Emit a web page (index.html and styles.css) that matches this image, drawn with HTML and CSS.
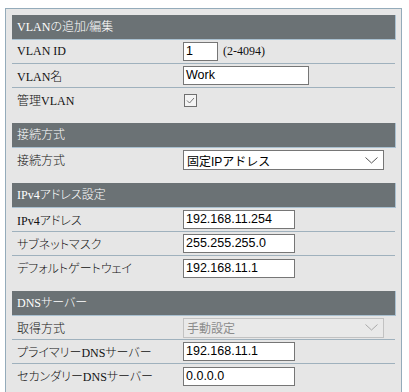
FILE: index.html
```html
<!DOCTYPE html>
<html lang="ja">
<head>
<meta charset="utf-8">
<title>VLAN</title>
<link rel="stylesheet" href="styles.css">
</head>
<body>
<div class="panel">
  <section class="section">
    <div class="head">VLANの追加/編集</div>
    <div class="row">
      <div class="label">VLAN ID</div>
      <div class="field"><span class="input w-id">1</span><span class="hint">(2-4094)</span></div>
    </div>
    <div class="row">
      <div class="label">VLAN名</div>
      <div class="field"><span class="input w-name">Work</span></div>
    </div>
    <div class="row last">
      <div class="label">管理VLAN</div>
      <div class="field">
        <span class="check"><svg width="11" height="11" viewBox="0 0 11 11"><path d="M2 5.5 L4.5 8 L9 3" fill="none" stroke="#666" stroke-width="0.9"/></svg></span>
      </div>
    </div>
  </section>

  <section class="section">
    <div class="head">接続方式</div>
    <div class="row last">
      <div class="label">接続方式</div>
      <div class="field">
        <div class="select"><span>固定IPアドレス</span><svg class="chev" width="13" height="7" viewBox="0 0 13 7"><path d="M0.5 0.5 L6.5 6 L12.5 0.5" fill="none" stroke="#555" stroke-width="1"/></svg></div>
      </div>
    </div>
  </section>

  <section class="section">
    <div class="head">IPv4アドレス設定</div>
    <div class="row">
      <div class="label">IPv4アドレス</div>
      <div class="field"><span class="input w-ip">192.168.11.254</span></div>
    </div>
    <div class="row">
      <div class="label">サブネットマスク</div>
      <div class="field"><span class="input w-ip">255.255.255.0</span></div>
    </div>
    <div class="row last">
      <div class="label">デフォルトゲートウェイ</div>
      <div class="field"><span class="input w-ip">192.168.11.1</span></div>
    </div>
  </section>

  <section class="section">
    <div class="head">DNSサーバー</div>
    <div class="row">
      <div class="label">取得方式</div>
      <div class="field">
        <div class="select disabled"><span>手動設定</span><svg class="chev" width="13" height="7" viewBox="0 0 13 7"><path d="M0.5 0.5 L6.5 6 L12.5 0.5" fill="none" stroke="#a8a8a8" stroke-width="1"/></svg></div>
      </div>
    </div>
    <div class="row">
      <div class="label">プライマリーDNSサーバー</div>
      <div class="field"><span class="input w-ip">192.168.11.1</span></div>
    </div>
    <div class="row last">
      <div class="label">セカンダリーDNSサーバー</div>
      <div class="field"><span class="input w-ip">0.0.0.0</span></div>
    </div>
  </section>
</div>
</body>
</html>
```
FILE: styles.css
```css
html, body {
  margin: 0;
  padding: 0;
  background: #ffffff;
}

body {
  font-family: "Liberation Serif", "Noto Sans CJK JP", serif;
  font-size: 12px;
  font-weight: 300;
  color: #111;
}

.panel {
  box-sizing: border-box;
  width: 397px;
  margin: 8px 0 0 5px;
  padding: 6px 5px 12px 6px;
  background: #e6e6e6;
  border: 1px solid #94abba;
}

.section {
  margin-bottom: 11px;
}

.section:last-child {
  margin-bottom: 0;
}

.head {
  box-sizing: border-box;
  height: 25px;
  line-height: 24px;
  padding-left: 5px;
  background: #6b7275;
  color: #ffffff;
  border-right: 1px solid #a9c0d0;
  border-bottom: 1px solid #a9c0d0;
  font-feature-settings: "palt";
}

.row {
  box-sizing: border-box;
  height: 24px;
  display: grid;
  grid-template-columns: 171px 1fr;
  align-items: center;
  border-bottom: 1px solid #9fb1bd;
  margin-right: 1px;
}

.row.last {
  border-bottom: none;
}

.label {
  padding-left: 5px;
  white-space: nowrap;
  font-feature-settings: "palt";
}

.field {
  display: flex;
  align-items: center;
}

.input {
  box-sizing: border-box;
  height: 19px;
  line-height: 17px;
  padding-left: 2px;
  background: #ffffff;
  border: 1px solid #767676;
  font-family: "Liberation Sans", "Noto Sans CJK JP", sans-serif;
  font-size: 12.5px;
  font-weight: 400;
  color: #000;
  white-space: nowrap;
}

.w-id { width: 35px; }
.w-name { width: 126px; }
.w-ip { width: 112px; }

.hint {
  margin-left: 5px;
  font-size: 12px;
}

.check {
  box-sizing: border-box;
  width: 13px;
  height: 13px;
  margin-left: 1px;
  border: 1px solid #6f6f6f;
  background: #f4f4f4;
  display: flex;
  align-items: center;
  justify-content: center;
}

.check svg {
  display: block;
}

.select {
  box-sizing: border-box;
  width: 201px;
  height: 20px;
  padding: 0 3px 0 3px;
  display: flex;
  align-items: center;
  justify-content: space-between;
  background: #ffffff;
  border: 1px solid #767676;
  font-family: "Liberation Sans", "Noto Sans CJK JP", sans-serif;
  font-size: 12px;
  font-weight: 400;
  color: #000;
}

.select .chev {
  display: block;
  margin-right: 2px;
}

.select.disabled {
  background: #e9e9e9;
  border-color: #c2c2c2;
  color: #8c8c8c;
}
```
